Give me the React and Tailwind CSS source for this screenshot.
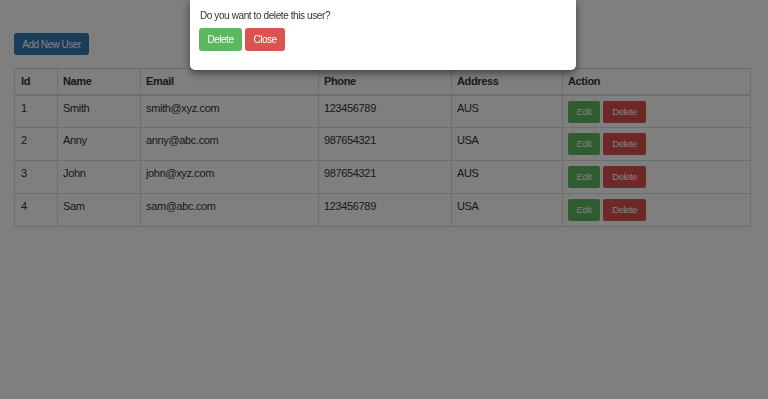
const users = [
  { id: 1, name: "Smith", email: "smith@xyz.com", phone: "123456789", address: "AUS" },
  { id: 2, name: "Anny", email: "anny@abc.com", phone: "987654321", address: "USA" },
  { id: 3, name: "John", email: "john@xyz.com", phone: "987654321", address: "AUS" },
  { id: 4, name: "Sam", email: "sam@abc.com", phone: "123456789", address: "USA" },
];

export default function App() {
  const font = { fontFamily: '"Liberation Sans", Arial, sans-serif' };

  return (
    <div style={font} className="relative h-[399px] w-full bg-white text-[11px] tracking-[-0.35px] text-[#333]">
      {/* Page */}
      <div className="pl-[14px] pr-[17px] pt-[33px]">
        <button className="h-[22px] w-[75px] rounded-[3px] bg-[#337ab7] text-[10px] tracking-[-0.5px] text-white">
          Add New User
        </button>

        <table className="mt-[13px] w-full border-collapse border border-[#ddd]">
          <thead>
            <tr className="h-[26px] text-left">
              <th className="w-[43px] border border-b-2 border-[#ddd] px-[6px] pb-[1px] font-bold">Id</th>
              <th className="w-[83px] border border-b-2 border-[#ddd] px-[5px] pb-[1px] font-bold">Name</th>
              <th className="w-[178px] border border-b-2 border-[#ddd] px-[5px] pb-[1px] font-bold">Email</th>
              <th className="w-[133px] border border-b-2 border-[#ddd] px-[5px] pb-[1px] font-bold">Phone</th>
              <th className="w-[111px] border border-b-2 border-[#ddd] px-[5px] pb-[1px] font-bold">Address</th>
              <th className="border border-b-2 border-[#ddd] px-[5px] pb-[1px] font-bold">Action</th>
            </tr>
          </thead>
          <tbody>
            {users.map((u) => (
              <tr key={u.id} className="h-[33px] align-top leading-[14px]">
                <td className="border border-[#ddd] px-[6px] pt-[5px]">{u.id}</td>
                <td className="border border-[#ddd] px-[5px] pt-[5px]">{u.name}</td>
                <td className="border border-[#ddd] px-[5px] pt-[5px]">{u.email}</td>
                <td className="border border-[#ddd] px-[5px] pt-[5px]">{u.phone}</td>
                <td className="border border-[#ddd] px-[5px] pt-[5px]">{u.address}</td>
                <td className="border border-[#ddd] px-[5px] pt-[5px]">
                  <div className="flex gap-[3px]">
                    <button className="h-[22px] w-[32px] rounded-[2px] bg-[#5cb85c] text-[9.5px] tracking-[-0.4px] text-white">
                      Edit
                    </button>
                    <button className="h-[22px] w-[43px] rounded-[2px] bg-[#d9534f] text-[9.5px] tracking-[-0.5px] text-white">
                      Delete
                    </button>
                  </div>
                </td>
              </tr>
            ))}
          </tbody>
        </table>
      </div>

      {/* Backdrop */}
      <div className="fixed inset-0 bg-black/50" />

      {/* Confirm dialog */}
      <div className="fixed left-[190px] top-0 h-[70px] w-[386px] rounded-b-[5px] bg-white px-[10px] pt-[10px] shadow-[0_3px_9px_rgba(0,0,0,0.5)]">
        <p className="text-[10px] leading-[12px] tracking-[-0.4px] text-[#333]">Do you want to delete this user?</p>
        <div className="mt-[6px] flex gap-[3px]">
          <button className="-ml-px h-[23px] w-[43px] rounded-[3px] bg-[#5cb85c] text-[10px] tracking-[-0.5px] text-white">
            Delete
          </button>
          <button className="h-[23px] w-[40px] rounded-[3px] bg-[#d9534f] text-[10px] tracking-[-0.5px] text-white">
            Close
          </button>
        </div>
      </div>
    </div>
  );
}
